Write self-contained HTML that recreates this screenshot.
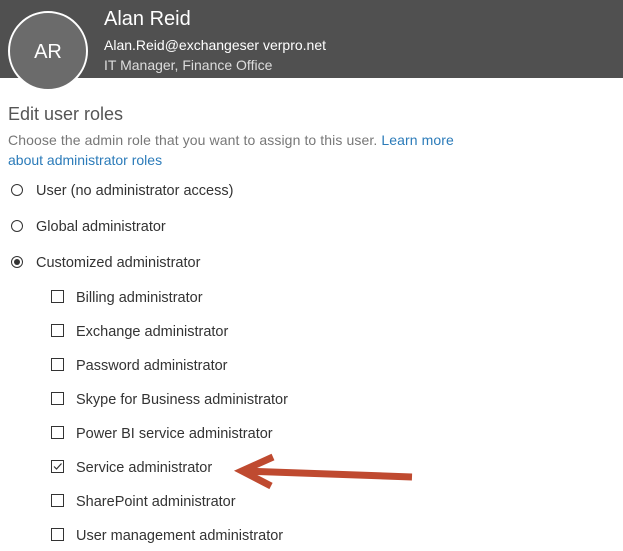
<!DOCTYPE html>
<html><head><meta charset="utf-8"><style>
body{margin:0;width:623px;height:551px;background:#fff;position:relative;overflow:hidden;font-family:"Liberation Sans",sans-serif;}
.hdr{position:absolute;left:0;top:0;width:623px;height:78px;background:#505050;}
.av{position:absolute;left:8px;top:11px;width:76px;height:76px;border-radius:50%;background:#6b6b6b;border:2px solid #fff;color:#fff;font-size:20px;text-align:center;line-height:78px;}
.t{position:absolute;white-space:nowrap;}
.rad{position:absolute;left:11px;width:10px;height:10px;border:1px solid #333;border-radius:50%;}
.cb{position:absolute;left:51px;width:11px;height:11px;border:1px solid #333;}
.lbl{position:absolute;font-size:14.5px;color:#333;white-space:nowrap;}
</style></head><body>
<div class="hdr"></div>
<div class="av">AR</div>
<div class="t" style="left:104px;top:8px;font-size:20px;color:#fff">Alan Reid</div>
<div class="t" style="left:104px;top:37px;font-size:14px;color:#fff">Alan.Reid@exchangeser verpro.net</div>
<div class="t" style="left:104px;top:57px;font-size:14px;color:#ddd">IT Manager, Finance Office</div>
<div class="t" style="left:8px;top:104px;font-size:18px;color:#555">Edit user roles</div>
<div class="t" style="left:8px;top:132px;font-size:14px;color:#777;letter-spacing:0.1px">Choose the admin role that you want to assign to this user. <span style="color:#2b7bb9">Learn more</span></div>
<div class="t" style="left:8px;top:152px;font-size:14px;color:#2b7bb9">about administrator roles</div>

<div class="rad" style="top:184px"></div><div class="lbl" style="left:36px;top:183px">User (no administrator access)</div>
<div class="rad" style="top:220px"></div><div class="lbl" style="left:36px;top:219px">Global administrator</div>
<div class="rad" style="top:256px"><div style="position:absolute;left:2px;top:2px;width:6px;height:6px;border-radius:50%;background:#333"></div></div><div class="lbl" style="left:36px;top:255px">Customized administrator</div>

<div class="cb" style="top:290px"></div><div class="lbl" style="left:76px;top:290px">Billing administrator</div>
<div class="cb" style="top:324px"></div><div class="lbl" style="left:76px;top:324px">Exchange administrator</div>
<div class="cb" style="top:358px"></div><div class="lbl" style="left:76px;top:358px">Password administrator</div>
<div class="cb" style="top:392px"></div><div class="lbl" style="left:76px;top:392px">Skype for Business administrator</div>
<div class="cb" style="top:426px"></div><div class="lbl" style="left:76px;top:426px">Power BI service administrator</div>
<div class="cb" style="top:460px"><svg width="11" height="11" style="position:absolute;left:0;top:0"><path d="M2 5.5L4.5 8L9.5 2.5" fill="none" stroke="#333" stroke-width="1.2"/></svg></div><div class="lbl" style="left:76px;top:460px">Service administrator</div>
<div class="cb" style="top:494px"></div><div class="lbl" style="left:76px;top:494px">SharePoint administrator</div>
<div class="cb" style="top:528px"></div><div class="lbl" style="left:76px;top:528px">User management administrator</div>

<svg width="623" height="551" style="position:absolute;left:0;top:0">
<path d="M412 477L244 471" stroke="#bf4a30" stroke-width="7" fill="none"/>
<path d="M273 457L242 471L271 486" stroke="#bf4a30" stroke-width="7" fill="none" stroke-linejoin="miter"/>
</svg>
</body></html>
